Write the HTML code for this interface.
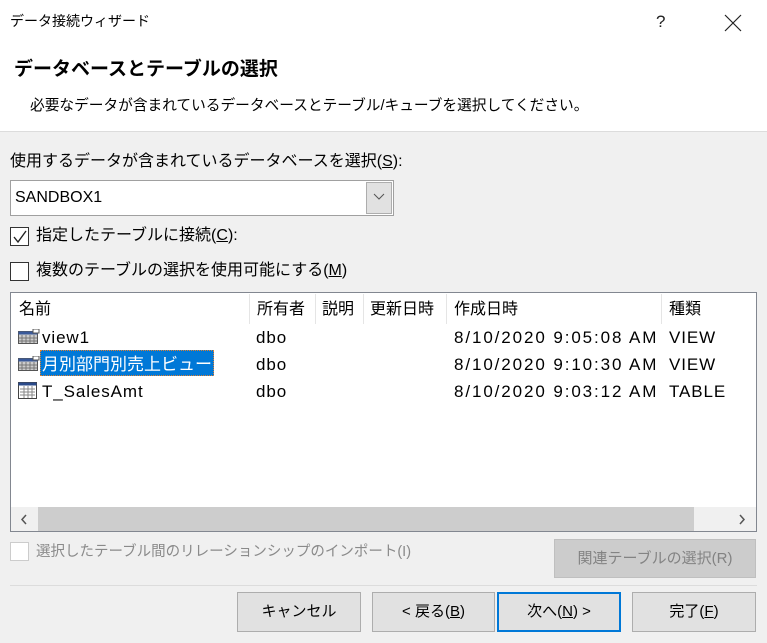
<!DOCTYPE html>
<html><head><meta charset="utf-8"><style>
*{margin:0;padding:0;box-sizing:border-box}
body{width:767px;height:643px;background:#f0f0f0;font-family:"Liberation Sans","Noto Sans CJK JP",sans-serif;color:#000;position:relative;overflow:hidden;font-size:15px}
.a{position:absolute;white-space:nowrap;line-height:1}
.top{position:absolute;left:0;top:0;width:767px;height:132px;background:#fff;border-bottom:1px solid #dcdcdc}
.cb{position:absolute;width:19px;height:19px;border:1px solid #333;background:#fff}
.btn{position:absolute;height:40px;border:1px solid #adadad;background:#e1e1e1;text-align:center;line-height:38px;font-size:15px}
u{text-decoration:underline}
.list{position:absolute;left:10px;top:292px;width:747px;height:240px;background:#fff;border:1px solid #828790}
.sep{position:absolute;top:1px;width:1px;height:30px;background:#e5e5e5}
.r{font-size:17px;letter-spacing:0.9px}
.d{font-size:17px;letter-spacing:1.9px}
</style></head><body>
<div class="top"></div>
<div class="a" style="left:10px;top:14px;font-size:14px">データ接続ウィザード</div>
<div class="a" style="left:656px;top:13px;font-size:17px;color:#222">?</div>
<svg class="a" style="left:724px;top:14px" width="18" height="18"><path d="M1 1L17 17M17 1L1 17" stroke="#222" stroke-width="1.2"/></svg>
<div class="a" style="left:14px;top:60px;font-size:19px;font-weight:bold">データベースとテーブルの選択</div>
<div class="a" style="left:30px;top:99px;font-size:14.7px">必要なデータが含まれているデータベースとテーブル/キューブを選択してください。</div>

<div class="a" style="left:10px;top:154px;font-size:16px">使用するデータが含まれているデータベースを選択(<u>S</u>):</div>
<div style="position:absolute;left:10px;top:180px;width:384px;height:36px;background:#fff;border:1px solid #a0a0a0"></div>
<div style="position:absolute;left:366px;top:182px;width:26px;height:32px;background:#e1e1e1;border:1px solid #adadad"></div>
<svg class="a" style="left:373px;top:193px" width="12" height="8"><path d="M1 1L6 6L11 1" stroke="#555" fill="none"/></svg>
<div class="a" style="left:15px;top:190px;font-size:16px">SANDBOX1</div>

<div class="cb" style="left:10px;top:227px"></div>
<svg class="a" style="left:12px;top:229px" width="16" height="16"><path d="M2 8L6 13L14 2" stroke="#222" fill="none" stroke-width="1.4"/></svg>
<div class="a" style="left:36px;top:228px;font-size:16px">指定したテーブルに接続(<u>C</u>):</div>
<div class="cb" style="left:10px;top:262px"></div>
<div class="a" style="left:36px;top:263px;font-size:16px">複数のテーブルの選択を使用可能にする(<u>M</u>)</div>

<div class="list">
<div class="sep" style="left:238px"></div><div class="sep" style="left:304px"></div><div class="sep" style="left:352px"></div><div class="sep" style="left:435px"></div><div class="sep" style="left:650px"></div>
<div class="a" style="left:8px;top:9px;font-size:16px">名前</div>
<div class="a" style="left:246px;top:9px;font-size:16px">所有者</div>
<div class="a" style="left:311px;top:9px;font-size:16px">説明</div>
<div class="a" style="left:359px;top:9px;font-size:16px">更新日時</div>
<div class="a" style="left:443px;top:9px;font-size:16px">作成日時</div>
<div class="a" style="left:658px;top:9px;font-size:16px">種類</div>
<div style="position:absolute;left:29px;top:57px;width:174px;height:26px;background:#0078d7;border:1px dotted #e08030"></div>
<svg class="a" style="left:7px;top:36px" width="22" height="16"><rect x="0.5" y="2.5" width="19" height="12" fill="#ccc" stroke="#555"/><rect x="0.5" y="2.5" width="19" height="3" fill="#3a5a9a"/><path d="M4 6v8M8 6v8M12 6v8M16 6v8M1 9h18M1 12h18" stroke="#777"/><rect x="15" y="0" width="6" height="4" fill="#fff" stroke="#555"/></svg>
<svg class="a" style="left:7px;top:63px" width="22" height="16"><rect x="0.5" y="2.5" width="19" height="12" fill="#ccc" stroke="#555"/><rect x="0.5" y="2.5" width="19" height="3" fill="#3a5a9a"/><path d="M4 6v8M8 6v8M12 6v8M16 6v8M1 9h18M1 12h18" stroke="#777"/><rect x="15" y="0" width="6" height="4" fill="#fff" stroke="#555"/></svg>
<svg class="a" style="left:7px;top:89px" width="20" height="18"><rect x="0.5" y="0.5" width="18" height="16" fill="#fff" stroke="#444"/><rect x="0.5" y="0.5" width="18" height="3" fill="#2a4a8a"/><path d="M2 7h15M2 10h15M2 13h15M6 4v12M10 4v12M14 4v12" stroke="#888"/></svg>
<div class="a r" style="left:31px;top:36px">view1</div>
<div class="a" style="left:31px;top:63px;font-size:17px;color:#fff">月別部門別売上ビュー</div>
<div class="a r" style="left:31px;top:90px">T_SalesAmt</div>
<div class="a r" style="left:245px;top:36px">dbo</div>
<div class="a r" style="left:245px;top:63px">dbo</div>
<div class="a r" style="left:245px;top:90px">dbo</div>
<div class="a d" style="left:443px;top:36px">8/10/2020 9:05:08 AM</div>
<div class="a d" style="left:443px;top:63px">8/10/2020 9:10:30 AM</div>
<div class="a d" style="left:443px;top:90px">8/10/2020 9:03:12 AM</div>
<div class="a r" style="left:658px;top:36px">VIEW</div>
<div class="a r" style="left:658px;top:63px">VIEW</div>
<div class="a r" style="left:658px;top:90px">TABLE</div>
<div style="position:absolute;left:0;top:214px;width:745px;height:24px;background:#f0f0f0"></div>
<div style="position:absolute;left:27px;top:214px;width:656px;height:24px;background:#cdcdcd"></div>
<svg class="a" style="left:9px;top:221px" width="8" height="11"><path d="M6 1L2 5.5L6 10" stroke="#555" fill="none" stroke-width="1.5"/></svg>
<svg class="a" style="left:727px;top:221px" width="8" height="11"><path d="M2 1L6 5.5L2 10" stroke="#555" fill="none" stroke-width="1.5"/></svg>
</div>

<div class="cb" style="left:10px;top:542px;border-color:#ccc"></div>
<div class="a" style="left:36px;top:545px;color:#8a8a8a;font-size:14.5px">選択したテーブル間のリレーションシップのインポート(I)</div>
<div class="btn" style="left:554px;top:539px;width:202px;height:39px;background:#ccc;border-color:#bfbfbf;color:#838383">関連テーブルの選択(R)</div>
<div style="position:absolute;left:10px;top:585px;width:747px;height:1px;background:#dcdcdc"></div>
<div class="btn" style="left:237px;top:592px;width:124px">キャンセル</div>
<div class="btn" style="left:372px;top:592px;width:123px">&lt; 戻る(<u>B</u>)</div>
<div class="btn" style="left:497px;top:592px;width:124px;border:2px solid #0078d7;line-height:36px">次へ(<u>N</u>) &gt;</div>
<div class="btn" style="left:632px;top:592px;width:124px">完了(<u>F</u>)</div>
</body></html>
